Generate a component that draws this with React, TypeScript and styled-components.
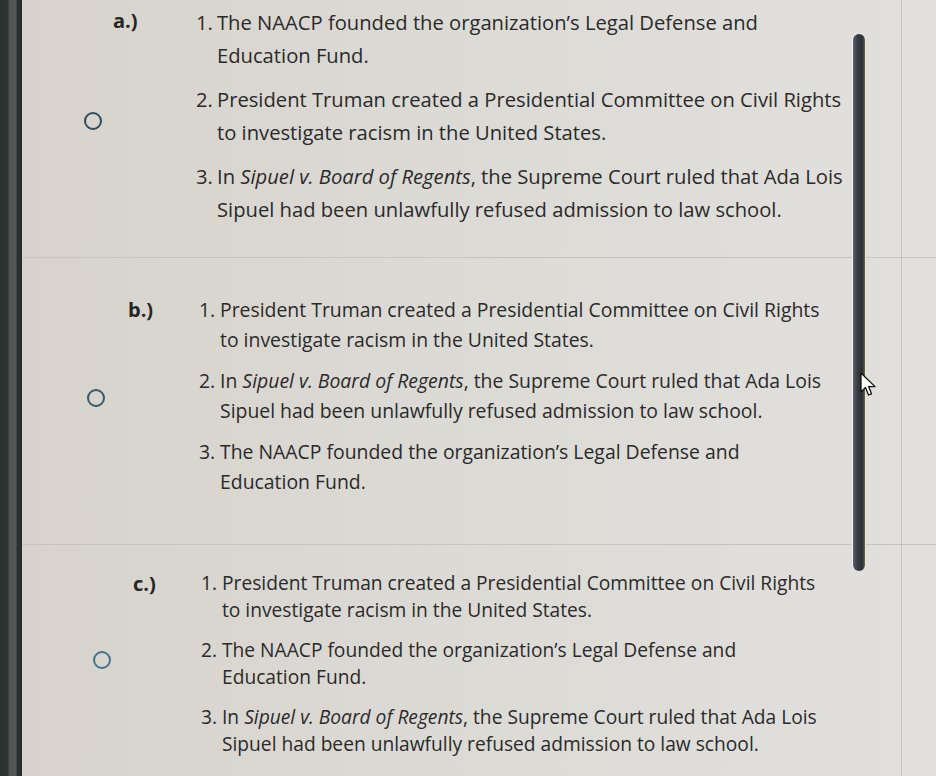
import React from "react";
import styled, { createGlobalStyle } from "styled-components";

const GlobalStyle = createGlobalStyle`
  html, body {
    margin: 0;
    padding: 0;
    width: 936px;
    height: 776px;
    overflow: hidden;
    background: #d8d5cf;
  }
  * { box-sizing: border-box; }
`;

const Frame = styled.div`
  position: relative;
  display: flex;
  width: 936px;
  height: 776px;
  overflow: hidden;
  font-family: "Open Sans", "Liberation Sans", sans-serif;
  color: #2a2a2a;
`;

const Bezel = styled.div`
  flex: 0 0 22px;
  background: linear-gradient(
    to right,
    #2a302f 0px,
    #2e3432 8px,
    #4f5452 9px,
    #555957 16px,
    #2c3230 17px,
    #262b2a 22px
  );
`;

const Screen = styled.div`
  flex: 1;
  display: flex;
  flex-direction: column;
  background: linear-gradient(to right, #d7d3cc 0%, #dcdad5 45%, #e1e0dc 100%);
`;

const Row = styled.div<{ $pt: number; $h: number; $pl: number; $last?: boolean }>`
  display: flex;
  align-items: stretch;
  height: ${(p) => p.$h}px;
  padding: ${(p) => p.$pt}px 0 0 ${(p) => p.$pl}px;
  border-bottom: ${(p) => (p.$last ? "none" : "1px solid #c6c4be")};
`;

const RadioCell = styled.div<{ $dy: number; $gap: number }>`
  flex: 0 0 18px;
  display: flex;
  align-items: center;
  margin-top: ${(p) => p.$dy}px;
  margin-right: ${(p) => p.$gap}px;
`;

const Radio = styled.span<{ $tone: string }>`
  display: block;
  width: 18px;
  height: 18px;
  border-radius: 50%;
  border: 2px solid ${(p) => p.$tone};
  background: transparent;
`;

const Label = styled.div<{ $w: number }>`
  flex: 0 0 ${(p) => p.$w}px;
  font-weight: 700;
  font-size: 20px;
  line-height: 30px;
  color: #262626;
`;

const List = styled.div<{ $gap: number }>`
  display: flex;
  flex-direction: column;
  gap: ${(p) => p.$gap}px;
`;

const Item = styled.div<{ $lh: number; $fs: number }>`
  display: flex;
  font-size: ${(p) => p.$fs}px;
  font-weight: 500;
  line-height: ${(p) => p.$lh}px;
  white-space: nowrap;
`;

const Num = styled.span`
  flex: 0 0 21px;
`;

const Lines = styled.div`
  display: flex;
  flex-direction: column;
`;

const Case = styled.i`
  font-style: italic;
`;

const ScrollThumb = styled.div`
  position: absolute;
  left: 853px;
  top: 34px;
  width: 12px;
  height: 537px;
  border-radius: 6px;
  background: linear-gradient(to right, #5d6369 0%, #343a40 40%, #2d3237 80%, #6a6a60 100%);
  box-shadow: -1px 0 0 #f1f3f5, 1px 0 0 #efe2c8;
`;

const EdgeLine = styled.div<{ $x: number }>`
  position: absolute;
  left: ${(p) => p.$x}px;
  top: 0;
  width: 1px;
  height: 776px;
  background: rgba(150, 150, 145, 0.35);
`;

const Cursor = styled.svg`
  position: absolute;
  left: 860px;
  top: 372px;
`;

const sipuel = (
  <>
    In <Case>Sipuel v. Board of Regents</Case>, the Supreme Court ruled that Ada Lois
  </>
);

const NAACP: React.ReactNode[] = [
  "The NAACP founded the organization’s Legal Defense and",
  "Education Fund.",
];
const TRUMAN: React.ReactNode[] = [
  "President Truman created a Presidential Committee on Civil Rights",
  "to investigate racism in the United States.",
];
const SIPUEL: React.ReactNode[] = [
  sipuel,
  "Sipuel had been unlawfully refused admission to law school.",
];

type Choice = {
  label: string;
  items: React.ReactNode[][];
  h: number;
  pt: number;
  pl: number;
  rgap: number;
  labelW: number;
  lh: number;
  fs: number;
  gap: number;
  dy: number;
  tone: string;
};

const choices: Choice[] = [
  { label: "a.)", items: [NAACP, TRUMAN, SIPUEL], h: 258, pt: 6, pl: 62, rgap: 11, labelW: 83, lh: 33, fs: 20.2, gap: 11, dy: -22, tone: "#2f4c5c" },
  { label: "b.)", items: [TRUMAN, SIPUEL, NAACP], h: 287, pt: 37, pl: 65, rgap: 23, labelW: 71, lh: 30, fs: 19.4, gap: 11, dy: -44, tone: "#34586c" },
  { label: "c.)", items: [TRUMAN, NAACP, SIPUEL], h: 231, pt: 24, pl: 71, rgap: 22, labelW: 68, lh: 27, fs: 19.2, gap: 13, dy: -26, tone: "#3f7590" },
];

const App = () => (
  <>
    <GlobalStyle />
    <Frame>
      <Bezel />
      <Screen>
        {choices.map((c, i) => (
          <Row key={c.label} $h={c.h} $pt={c.pt} $pl={c.pl} $last={i === choices.length - 1}>
            <RadioCell $dy={c.dy} $gap={c.rgap}>
              <Radio $tone={c.tone} />
            </RadioCell>
            <Label $w={c.labelW}>{c.label}</Label>
            <List $gap={c.gap}>
              {c.items.map((lines, n) => (
                <Item key={n} $lh={c.lh} $fs={c.fs}>
                  <Num>{n + 1}.</Num>
                  <Lines>
                    {lines.map((l, k) => (
                      <span key={k}>{l}</span>
                    ))}
                  </Lines>
                </Item>
              ))}
            </List>
          </Row>
        ))}
      </Screen>
      <EdgeLine $x={901} />
      <ScrollThumb />
      <Cursor width="18" height="26" viewBox="0 0 18 26">
        <path d="M1 1 L1 20 L5.5 15.5 L8.5 23 L11.5 21.8 L8.6 14.6 L15 14.6 Z" fill="#ffffff" stroke="#111" strokeWidth="1.3" strokeLinejoin="round" />
      </Cursor>
    </Frame>
  </>
);

export default App;
